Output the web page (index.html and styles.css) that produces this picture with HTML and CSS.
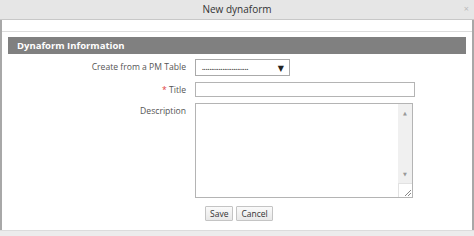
FILE: index.html
```html
<!DOCTYPE html>
<html lang="en">

<head>
    <meta charset="UTF-8">
    <title>New dynaform</title>
    <link rel="stylesheet" href="styles.css">
</head>

<body>
    <div class="dialog">
        <div class="titlebar">
            <span class="title">New dynaform</span>
            <span class="close">&times;</span>
        </div>
        <div class="frame">
            <div class="toolbar"></div>
            <div class="section">
                <div class="section-head">Dynaform Information</div>
                <div class="form">
                    <label class="label">Create from a PM Table</label>
                    <div class="select">
                        <span>.........................</span>
                        <span class="arrow">&#9660;</span>
                    </div>

                    <label class="label"><span class="req">*</span> Title</label>
                    <input type="text" class="input">

                    <label class="label">Description</label>
                    <div class="textarea">
                        <div class="scroll">
                            <span class="up">&#9650;</span>
                            <span class="down">&#9660;</span>
                            <span class="grip">
                                <svg width="8" height="8" viewBox="0 0 8 8">
                                    <path d="M1 7L7 1M4 7L7 4" stroke="#888" stroke-width="1" fill="none"/>
                                </svg>
                            </span>
                        </div>
                    </div>

                    <div></div>
                    <div class="buttons">
                        <button class="btn">Save</button>
                        <button class="btn">Cancel</button>
                    </div>
                </div>
            </div>
        </div>
        <div class="bottom"></div>
    </div>
</body>

</html>
```

FILE: styles.css
```css
body {
    margin: 0;
    background-color: white;
    font-family: "Open Sans", "DejaVu Sans", sans-serif;
    color: #444;
}

.dialog {
    width: 474px;
    height: 236px;
    display: flex;
    flex-direction: column;
}

.titlebar {
    height: 20px;
    background-color: #e6e6e6;
    border-bottom: 1px solid #c8c8c8;
    box-sizing: border-box;
    display: flex;
    justify-content: center;
    align-items: center;
    position: relative;
    font-size: 10px;
    color: #333;
}

.close {
    position: absolute;
    right: 5px;
    top: 2px;
    font-size: 9px;
    color: #bbb;
}

.frame {
    height: 211px;
    border-left: 2px solid #a8a8a8;
    border-right: 2px solid #a8a8a8;
    box-sizing: border-box;
    background-color: white;
}

.toolbar {
    height: 11px;
    border-bottom: 1px solid #dcdcdc;
}

.section {
    padding: 5px 6px 0 6px;
}

.section-head {
    height: 17px;
    background-color: #808080;
    color: white;
    font-weight: bold;
    font-size: 9.5px;
    line-height: 17px;
    padding-left: 9px;
}

.form {
    display: grid;
    grid-template-columns: 178px 220px;
    column-gap: 9px;
    row-gap: 6px;
    margin-top: 5px;
    font-size: 8.6px;
}

.label {
    text-align: right;
    padding-top: 2px;
    color: #555;
}

.req {
    color: #e04040;
}

.select {
    width: 95px;
    height: 17px;
    border: 1px solid #aaa;
    box-sizing: border-box;
    display: flex;
    justify-content: space-between;
    align-items: center;
    padding: 0 5px 0 6px;
    font-size: 6.5px;
    font-weight: bold;
    color: #222;
}

.arrow {
    font-size: 8px;
    font-weight: normal;
}

.input {
    width: 220px;
    height: 15px;
    border: 1px solid #b4b4b4;
    box-sizing: border-box;
    margin: 0;
    padding: 0;
}

.textarea {
    width: 218px;
    height: 95px;
    border: 1px solid #b4b4b4;
    box-sizing: border-box;
    display: flex;
    justify-content: flex-end;
}

.scroll {
    width: 14px;
    background-color: #f0f0f0;
    position: relative;
    font-size: 5px;
    color: #999;
}

.up {
    position: absolute;
    top: 6px;
    left: 5px;
}

.down {
    position: absolute;
    bottom: 20px;
    left: 5px;
}

.grip {
    position: absolute;
    bottom: 0;
    left: 0;
    width: 14px;
    height: 14px;
    box-sizing: border-box;
    background-color: white;
    border-left: 1px solid #e2e2e2;
    border-top: 1px solid #e2e2e2;
    display: flex;
    justify-content: flex-end;
    align-items: flex-end;
}

.buttons {
    display: flex;
    gap: 3px;
    padding-left: 10px;
    margin-top: 2px;
}

.btn {
    height: 15px;
    padding: 0 4px;
    font-family: "Open Sans", "DejaVu Sans", sans-serif;
    font-size: 8.5px;
    color: #333;
    background: linear-gradient(#fafafa, #e8e8e8);
    border: 1px solid #c4c4c4;
    border-radius: 1px;
}

.bottom {
    height: 5px;
    background-color: #ececec;
    border-top: 1px solid #dcdcdc;
}
```
